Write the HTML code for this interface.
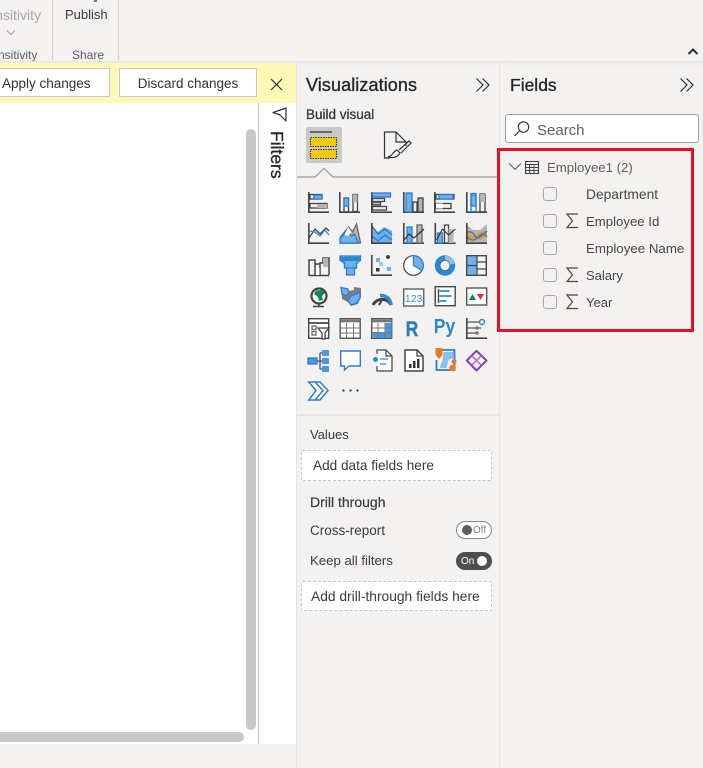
<!DOCTYPE html>
<html><head><meta charset="utf-8"><style>
html,body{margin:0;padding:0}
body{width:703px;height:768px;overflow:hidden;position:relative;background:#f3f2f1;font-family:"Liberation Sans",sans-serif;color:#323130}
div,span{position:absolute;white-space:nowrap}
.t{font-size:13.3px;line-height:18px;color:#3b3a39}
.h{font-size:18px;line-height:24px;color:#252423;-webkit-text-stroke:.3px #252423}
.cb{left:543px;width:12px;height:12px;border:1.5px solid #a8a6a4;border-radius:3px;background:#f3f2f1}
.dash{border:1px dashed #c8c6c4;background:#fff;box-sizing:border-box;border-radius:2px}
.btn{background:#fff;border:1px solid #c8c6c4;box-sizing:border-box;text-align:center;font-size:13.5px;line-height:29px;color:#323130}
</style></head><body>
<!-- ribbon -->
<div style="left:0;top:0;width:703px;height:62px;background:#f3f2f1"></div>
<div style="left:52px;top:0;width:1px;height:60px;background:#d2d0ce"></div>
<div style="left:118px;top:0;width:1px;height:60px;background:#d2d0ce"></div>
<div class="t" style="left:-3px;top:6px;color:#a8a6a4;width:44px;overflow:hidden;direction:rtl;font-size:14px">sensitivity</div>
<svg style="position:absolute;left:6px;top:29px" width="10" height="8"><path d="M1 1.500L5 5.500L9 1.500" fill="none" stroke="#a8a6a4" stroke-width="1.200"/></svg>
<div class="t" style="left:-2px;top:46px;font-size:12px;color:#605e5c;">nsitivity</div>
<div class="t" style="left:65px;top:6px;font-size:13px;color:#3b3a39">Publish</div>
<div class="t" style="left:72px;top:46px;font-size:12px;color:#605e5c">Share</div>
<div style="left:94px;top:0;width:3px;height:2px;background:#2b88d8"></div>
<svg style="position:absolute;left:687px;top:47px" width="12" height="10"><path d="M1.500 7L6 2.500L10.500 7" fill="none" stroke="#323130" stroke-width="2"/></svg>
<div style="left:0;top:61px;width:703px;height:4px;background:linear-gradient(#e8e6e4,#f0efee)"></div>
<!-- yellow bar -->
<div style="left:0;top:63px;width:296px;height:40px;background:#fff9b8"></div>
<div class="btn" style="left:-20px;top:68px;width:130px;height:29px;text-align:left;padding-left:21px;line-height:30px">Apply changes</div>
<div class="btn" style="left:119px;top:68px;width:138px;height:29px;line-height:30px">Discard changes</div>
<svg style="position:absolute;left:270px;top:78px" width="13" height="13"><path d="M1 1L12 12M12 1L1 12" stroke="#323130" stroke-width="1.200"/></svg>
<!-- canvas -->
<div style="left:0;top:103px;width:296px;height:641px;background:#fff"></div>
<div style="left:258px;top:103px;width:1px;height:641px;background:#bdbbb9"></div>
<div style="left:246px;top:129px;width:10px;height:601px;border-radius:5px;background:#c8c8c8"></div>
<div style="left:-10px;top:732px;width:254px;height:10px;border-radius:5px;background:#c8c8c8"></div>
<svg style="position:absolute;left:272px;top:107px" width="15" height="16"><path d="M1 5.500L14 1V14L8 8Z" fill="none" stroke="#323130" stroke-width="1.200" stroke-linejoin="round"/></svg>
<div style="left:268px;top:131px;font-size:17.500px;line-height:18px;transform-origin:0 0;transform:translate(18px,0) rotate(90deg);color:#252423;-webkit-text-stroke:.3px #252423">Filters</div>
<div style="left:296px;top:65px;width:1px;height:703px;background:#e6e4e2"></div>
<div style="left:499px;top:65px;width:1px;height:703px;background:#e6e4e2"></div>
<!-- Viz pane -->
<div class="h" style="left:306px;top:73px;letter-spacing:.1px">Visualizations</div>
<svg style="position:absolute;left:475px;top:77px" width="16" height="16"><path d="M1.500 1.500L8 8L1.500 14.500M7.500 1.500L14 8L7.500 14.500" fill="none" stroke="#323130" stroke-width="1.200"/></svg>
<div class="t" style="left:306px;top:106px;-webkit-text-stroke:.25px #323130;font-size:13.500px;color:#323130">Build visual</div>
<div style="left:306px;top:127px;width:36px;height:36px;background:#c8c8c8;border-radius:2px"></div>
<svg style="position:absolute;left:296px;top:120px" width="204" height="62">
<path d="M14 12H36" stroke="#333" stroke-width="1.300"/>
<rect x="14.500" y="17.500" width="26" height="9" fill="#f2c811" stroke="#333" stroke-width="1.100" stroke-dasharray="1.500 1"/>
<rect x="14.500" y="29.500" width="26" height="9" fill="#f2c811" stroke="#333" stroke-width="1.100" stroke-dasharray="1.500 1"/>
<path d="M94 38H88.500V12H100L110 22V26M100 12V22H110" fill="none" stroke="#333" stroke-width="1.200"/>
<path d="M92 37C97 36 97 31 101 30L104 33C102 37 97 38.500 92 37ZM103 30L113 21L115 23L105 33" fill="none" stroke="#333" stroke-width="1.200"/>
<path d="M1 57H19L28 48.500L37 57H203" fill="#f3f2f1" stroke="#aaa8a6" stroke-width="1.400"/>
</svg>
<!-- viz icons -->
<svg style="position:absolute;left:300px;top:185px" width="195" height="225" fill="none" stroke-width="1.300">
<defs><path id="ax" d="M.8 0V20.200H21" stroke="#444" stroke-width="1.600"/></defs>
<g transform="translate(8,7)"><use href="#ax"/><rect x="2" y="2.500" width="12" height="4.500" stroke="#444"/><rect x="6" y="3" width="8" height="4" fill="#6fb0e8" stroke="#2b7cd3"/><rect x="2" y="11.500" width="17" height="4.500" stroke="#444"/><rect x="9" y="12" width="10" height="4" fill="#b5b5b5"/></g>
<g transform="translate(39,7)"><use href="#ax"/><rect x="5" y="6" width="4.500" height="14" stroke="#444"/><rect x="5" y="6" width="4.500" height="8" fill="#6fb0e8" stroke="#2b7cd3"/><rect x="14" y="2.500" width="4.500" height="17" stroke="#444"/><rect x="14" y="2.500" width="4.500" height="8" fill="#b5b5b5"/></g>
<g transform="translate(71,7)"><use href="#ax"/><rect x="1.500" y="1" width="18" height="4" fill="#6fb0e8" stroke="#2b7cd3"/><rect x="1.500" y="6.500" width="12" height="3" stroke="#444"/><rect x="1.500" y="10" width="8" height="3" fill="#b5b5b5" stroke="#444"/><rect x="1.500" y="14.500" width="14" height="3.500" stroke="#444"/></g>
<g transform="translate(103,7)"><use href="#ax"/><rect x="3" y="1" width="6" height="19" fill="#6fb0e8" stroke="#2b7cd3"/><rect x="10" y="10" width="4" height="10" stroke="#444"/><rect x="15" y="6" width="5" height="14" fill="#b5b5b5" stroke="#444"/></g>
<g transform="translate(134,7)"><use href="#ax"/><rect x="2" y="2.500" width="18" height="4.500" stroke="#444"/><rect x="5" y="2.500" width="14" height="4.500" fill="#6fb0e8" stroke="#2b7cd3"/><rect x="2" y="11.500" width="15" height="5" stroke="#444"/><rect x="2" y="11.500" width="7" height="5" fill="#fff"/></g>
<g transform="translate(166,7)"><use href="#ax"/><rect x="5" y="1.500" width="5" height="18" stroke="#2b7cd3"/><rect x="5" y="3" width="5" height="11" fill="#6fb0e8" stroke="#2b7cd3"/><rect x="14" y="2" width="5" height="18" stroke="#444"/><rect x="14" y="2" width="5" height="8" fill="#b5b5b5"/></g>
<!-- row2 -->
<g transform="translate(8,38)"><use href="#ax"/><path d="M1 15L7 6L12 11L18 5L21 8" stroke="#444" stroke-width="1.300"/><path d="M1 8L7 9L12 13L17 7L21 12" stroke="#2b88d8" stroke-width="1.300"/></g>
<g transform="translate(39.500,38)"><path d="M1 20V14L9 4L13 9L17 1L21 20Z" fill="#b5b5b5" stroke="#666"/><path d="M.5 20.200V15L8 8L12 13L15 11L19 20.200Z" fill="#6fb0e8" stroke="#2b7cd3" stroke-width="1.300"/><path d="M5 12L8.500 4L12 9L9 13Z" fill="#fff"/></g>
<g transform="translate(71,38)"><path d="M1 3L7 9L13 4L21 8V20H1Z" fill="#6fb0e8"/><path d="M1 3L7 11L14 6L21 12" stroke="#2b7cd3" stroke-width="1.400"/><path d="M1 13L7 18L14 12L21 17" stroke="#2b7cd3" stroke-width="1.400"/><use href="#ax"/></g>
<g transform="translate(103,38)"><use href="#ax"/><rect x="4" y="4" width="5" height="16" fill="#6fb0e8" stroke="#2b7cd3"/><rect x="14" y="2" width="5" height="18" fill="#b5b5b5" stroke="#666"/><path d="M1 17L6 11L11 15L21 6" stroke="#333" stroke-width="1.200"/></g>
<g transform="translate(134.500,38)"><use href="#ax"/><rect x="3" y="10" width="5" height="10" fill="#6fb0e8" stroke="#2b7cd3"/><rect x="10" y="2" width="4" height="18" stroke="#444"/><rect x="14" y="6" width="5" height="14" fill="#b5b5b5"/><path d="M2 17L8 6L14 12L21 6" stroke="#333" stroke-width="1.100"/></g>
<g transform="translate(166,38)"><path d="M1 2L7 7L14 7L21 1V20H1Z" fill="#b5b5b5"/><path d="M1 9L7 13L14 9L21 8V13L14 17L7 18L1 15Z" fill="#f09a28"/><path d="M1 9Q7 8 9 13T21 8" stroke="#2b7cd3" stroke-width="1.500"/><path d="M1 14Q7 20 12 14T21 14" stroke="#2b7cd3" stroke-width="1.300"/><use href="#ax"/></g>
<!-- row3 -->
<g transform="translate(8,70)"><path d="M1 20V5H7V20M7 20V9H12V20M12 20V8H15V3H21V20" stroke="#444" stroke-width="1.500"/><path d="M.5 20.500H21" stroke="#444" stroke-width="1.500"/><rect x="8" y="13" width="3.500" height="7" fill="#fff" stroke="none"/><rect x="15" y="3" width="5" height="9" fill="#b5b5b5" stroke="none"/></g>
<g transform="translate(39.500,70)"><path d="M.5 1H21V5.500L18 7V8H17V13H15V20H7V13H5V8H4V7L.5 5.500Z" fill="#6fb0e8" stroke="#2b7cd3" stroke-width="1.300"/><path d="M1 2H21V6H1Z" fill="#2b88d8"/><path d="M5 13H17" stroke="#2b7cd3" stroke-width="1.200"/></g>
<g transform="translate(71,70)"><use href="#ax"/><rect x="5" y="3" width="4" height="4" fill="#6fb0e8"/><rect x="8" y="7" width="4" height="4" fill="#9cc8ee"/><rect x="5" y="13" width="3.500" height="3.500" fill="#333"/><rect x="16" y="12" width="4" height="4" fill="#6fb0e8"/><circle cx="17" cy="2" r="2" fill="#444"/></g>
<g transform="translate(103,70)"><circle cx="10.500" cy="10.500" r="9.800" fill="#fff" stroke="#444" stroke-width="1.200"/><path d="M10.500 .7A9.800 9.800 0 0 1 19 15.500L10.500 10.500Z" fill="#6fb0e8" stroke="#2b7cd3" stroke-width="1.200"/></g>
<g transform="translate(134.500,70)"><circle cx="10.500" cy="10.500" r="7.700" stroke="#2b88d8" stroke-width="5"/><path d="M10.500 2.800A7.700 7.700 0 0 1 18 9" stroke="#8cc0ec" stroke-width="5"/><circle cx="10.500" cy="10.500" r="5" stroke="#444" stroke-width=".6"/></g>
<g transform="translate(166,70)"><rect x=".7" y=".7" width="19.600" height="19.600" stroke="#444" stroke-width="1.400"/><rect x="1.500" y="1.500" width="10" height="18" fill="#6fb0e8"/><path d="M1 10.500H11M11 1V20M11 7H20M11 14H20" stroke="#444" stroke-width="1.200"/></g>
<!-- row4 -->
<g transform="translate(10,102)"><circle cx="9" cy="9" r="7.500" fill="#fff" stroke="#444" stroke-width="2.200"/><path d="M6 3.500L12 3L15 6L12 9L13 13L9 14L8 10L4 7Z" fill="#128a4a"/><path d="M3 19.500H14M9 16V19" stroke="#444" stroke-width="1.600"/></g>
<g transform="translate(40,102)"><path d="M1 0L7 2L9 4L14 3V0L21 1V10L18 17L11 19L8 15L2 12Z" fill="#7d7d7d"/><path d="M1 .5L8 2L9 6L6 9L2 7Z" fill="#6fb0e8" stroke="#2b7cd3"/><path d="M11 9L20 5V11L17 16L11 18L8 14Z" fill="#6fb0e8" stroke="#2b7cd3"/></g>
<g transform="translate(71,103)"><path d="M2 17A10 10 0 0 1 20 17" stroke="#444" stroke-width="3" fill="none"/><path d="M9 7.500A10 10 0 0 1 20 17" stroke="#2b88d8" stroke-width="3.500"/><path d="M8 17L11 12" stroke="#444" stroke-width="2"/></g>
<g transform="translate(103,103)"><rect x=".7" y="1" width="20" height="17" fill="#fff" stroke="#666" stroke-width="1.500"/><text x="10.700" y="14" font-family="Liberation Sans" font-size="10.500" fill="#2b88d8" text-anchor="middle">123</text></g>
<g transform="translate(134.500,101)"><rect x=".7" y=".7" width="20" height="19" fill="#fff" stroke="#444" stroke-width="1.400"/><path d="M4 3V17" stroke="#444"/><path d="M5 5H15M5 10H17M5 15H12" stroke="#2b88d8" stroke-width="1.800"/></g>
<g transform="translate(166,102)"><rect x=".7" y="1" width="20" height="17" fill="#fff" stroke="#555" stroke-width="1.400"/><path d="M3 13L6.500 7L10 13Z" fill="#128a4a"/><path d="M11 7H18L14.500 13Z" fill="#d13438"/></g>
<!-- row5 -->
<g transform="translate(8,133)"><rect x=".7" y=".7" width="20" height="19.600" fill="#fff" stroke="#444" stroke-width="1.400"/><path d="M1 5H21" stroke="#444" stroke-width="1.800"/><rect x="4" y="8" width="4" height="3.500" stroke="#666"/><rect x="4" y="13.500" width="4" height="3.500" stroke="#666"/><path d="M10 10H21L17 15V21H14V15Z" fill="#fff" stroke="#444" stroke-width="1.300"/></g>
<g transform="translate(39.500,133)"><rect x=".7" y=".7" width="20" height="19.600" fill="#fff" stroke="#555" stroke-width="1.400"/><path d="M1 3H21" stroke="#777" stroke-width="2.800"/><path d="M7 5V20M14 5V20M1 10H21M1 15H21" stroke="#777" stroke-width="1"/></g>
<g transform="translate(71,133)"><rect x=".7" y=".7" width="20" height="19.600" fill="#fff" stroke="#555" stroke-width="1.400"/><rect x="14" y="5" width="6.500" height="15" fill="#4a9ae0"/><rect x="1" y="14" width="19" height="6" fill="#4a9ae0"/><path d="M1 3H21" stroke="#777" stroke-width="2.800"/><path d="M7 5V20M14 5V20M1 10H21M1 15H21" stroke="#777" stroke-width="1"/></g>
<text transform="translate(112,151) scale(.82,1)" font-family="Liberation Sans" font-size="21" font-weight="700" fill="#2b7cb8" stroke="#2b7cb8" stroke-width=".5" text-anchor="middle">R</text>
<text transform="translate(144.500,148) scale(.88,1)" font-family="Liberation Sans" font-size="20" font-weight="700" fill="#2b88c8" text-anchor="middle">Py</text>
<g transform="translate(166,133)"><use href="#ax"/><path d="M1 4H14M1 10H15M1 15H10" stroke="#555" stroke-width="1.200"/><circle cx="16" cy="4" r="2.500" fill="#fff" stroke="#2b88d8" stroke-width="1.500"/><circle cx="11" cy="10" r="1.800" fill="#777"/><circle cx="11" cy="15" r="1.800" fill="#777"/></g>
<!-- row6 -->
<g transform="translate(8,164)"><rect x="0" y="9" width="9" height="6" fill="#4a9ae0" stroke="#2b7cd3"/><path d="M9 12H12M12 4V20M12 4H14M12 12H14M12 20H14" stroke="#333" stroke-width="1.100"/><rect x="14" y="1" width="7" height="6" fill="#4a9ae0"/><rect x="14" y="9" width="7" height="6" fill="#4a9ae0"/><rect x="14" y="17" width="7" height="6" fill="#4a9ae0"/></g>
<g transform="translate(40,165)"><path d="M.7 1H20.300V16H9L4.500 20V16H.7Z" fill="#fff" stroke="#2b7cd3" stroke-width="1.400"/></g>
<g transform="translate(72,164)"><path d="M5 5V1H14L20 7V22H5V17" fill="#fff" stroke="#444" stroke-width="1.200"/><path d="M14 1V7H20" stroke="#444"/><circle cx="3.500" cy="10.500" r="2.500" fill="#2b88d8"/><path d="M8 10H16M8 15H14" stroke="#2b88d8" stroke-width="1.300"/></g>
<g transform="translate(104,164)"><path d="M1 1H13L19 7V22H1Z" fill="#fff" stroke="#444" stroke-width="1.500"/><path d="M13 1V7H19" stroke="#444"/><rect x="5" y="15" width="2.500" height="4" fill="#333"/><rect x="9" y="12" width="2.500" height="7" fill="#333"/><rect x="13" y="10" width="2.500" height="9" fill="#333"/></g>
<g transform="translate(134.500,163)"><path d="M5 2H20V22H2V12" stroke="#2b7cd3" stroke-width="1.800"/><path d="M9 4H19V10L14 12L12 20H5L8 12Z" fill="#8cc0ec"/><path d="M1 0H8V7L4.500 11L1 7Z" fill="#e87d1e"/><circle cx="19.500" cy="13.500" r="2.500" fill="#e87d1e"/><circle cx="18" cy="20" r="3.300" fill="#e87d1e"/></g>
<g transform="translate(166,165)"><path d="M10.500 .8L20.500 10.500L10.500 20.500L.8 10.500Z" stroke="#8b3fb0" stroke-width="2" stroke-linejoin="round"/><path d="M6 6L15 15M15 6L6 15" stroke="#a86cc8" stroke-width="1.500"/></g>
<!-- row7 -->
<g transform="translate(8,196)"><path d="M.8 1H12L20 9.500L12 19H.8L8 9.500Z" fill="#fff" stroke="#2b7cd3" stroke-width="1.500"/><path d="M7 1L15 9.500L7 19" stroke="#2b7cd3" stroke-width="1.500"/></g>
<circle cx="43.500" cy="205.500" r="1.100" fill="#333"/><circle cx="50.500" cy="205.500" r="1.100" fill="#333"/><circle cx="57.500" cy="205.500" r="1.100" fill="#333"/>
</svg>
<div style="left:297px;top:414px;width:202px;height:2px;background:#e6e4e2"></div>
<div class="t" style="left:310px;top:426px;font-size:13px">Values</div>
<div class="dash t" style="left:301px;top:450px;width:191px;height:31px;line-height:29px;padding-left:11px;font-size:13.600px">Add data fields here</div>
<div class="t" style="left:310px;top:493px;font-size:14px;-webkit-text-stroke:.2px #3b3a39">Drill through</div>
<div class="t" style="left:310px;top:522px;font-size:13.500px">Cross-report</div>
<div class="t" style="left:310px;top:552px;font-size:13.200px">Keep all filters</div>
<div style="left:456px;top:521px;width:36px;height:18px;box-sizing:border-box;border:1px solid #8a8886;border-radius:9px;background:#fff"></div>
<div style="left:462px;top:525px;width:10px;height:10px;border-radius:50%;background:#605e5c"></div>
<div style="left:473px;top:524px;font-size:10px;line-height:13px;color:#8a8886">Off</div>
<div style="left:456px;top:552px;width:36px;height:18px;border-radius:9px;background:#504e4c"></div>
<div style="left:477px;top:556px;width:10px;height:10px;border-radius:50%;background:#fff"></div>
<div style="left:461px;top:555px;font-size:10px;line-height:13px;color:#fff">On</div>
<div class="dash t" style="left:301px;top:581px;width:191px;height:30px;line-height:29px;padding-left:9px;color:#3b3a39;font-size:13.800px">Add drill-through fields here</div>
<!-- Fields -->
<div class="h" style="left:510px;top:73px;font-size:17.500px">Fields</div>
<svg style="position:absolute;left:679px;top:77px" width="16" height="16"><path d="M1.500 1.500L8 8L1.500 14.500M7.500 1.500L14 8L7.500 14.500" fill="none" stroke="#323130" stroke-width="1.200"/></svg>
<div style="left:505px;top:114px;width:194px;height:29px;box-sizing:border-box;border:1.500px solid #a19f9d;border-radius:3px;background:#fff"></div>
<svg style="position:absolute;left:513px;top:120px" width="18" height="18"><circle cx="10.500" cy="7" r="5.200" fill="none" stroke="#323130" stroke-width="1.100"/><path d="M6.500 11L1.500 16" stroke="#323130" stroke-width="1.200"/></svg>
<div style="left:537px;top:121px;font-size:15px;line-height:19px;color:#605e5c">Search</div>
<div style="left:497px;top:148px;width:197px;height:184px;box-sizing:border-box;border:3px solid #e81123"></div>
<svg style="position:absolute;left:508px;top:160px" width="36" height="16" fill="none"><path d="M1 3.500L7 9.500L13 3.500" stroke="#605e5c" stroke-width="1.100"/><rect x="17.500" y="1.500" width="13" height="12" stroke="#444" stroke-width="1.100"/><path d="M17.500 4.500H30.500M17.500 7.500H30.500M17.500 10.500H30.500M21.500 4V13.500M26 4V13.500" stroke="#444" stroke-width=".9"/></svg>
<div class="t" style="left:547px;top:159px;color:#605e5c;font-size:13.200px">Employee1 (2)</div>
<div class="cb" style="top:187px"></div><div class="t" style="left:586px;top:186px;color:#484644;font-size:13.800px">Department</div>
<div class="cb" style="top:214px"></div><div class="t" style="left:586px;top:213px;color:#484644;font-size:13.200px">Employee Id</div>
<div class="cb" style="top:241px"></div><div class="t" style="left:586px;top:240px;color:#484644">Employee Name</div>
<div class="cb" style="top:268px"></div><div class="t" style="left:586px;top:267px;color:#484644;font-size:13px">Salary</div>
<div class="cb" style="top:295px"></div><div class="t" style="left:586px;top:294px;color:#484644;font-size:13px">Year</div>
<svg style="position:absolute;left:565px;top:212px" width="15" height="100" fill="none" stroke="#484644" stroke-width="1.200"><path d="M13 2H2L7.500 9L2 15.500H13"/><path d="M13 56H2L7.500 63L2 69.500H13"/><path d="M13 83H2L7.500 90L2 96.500H13"/></svg>
</body></html>
